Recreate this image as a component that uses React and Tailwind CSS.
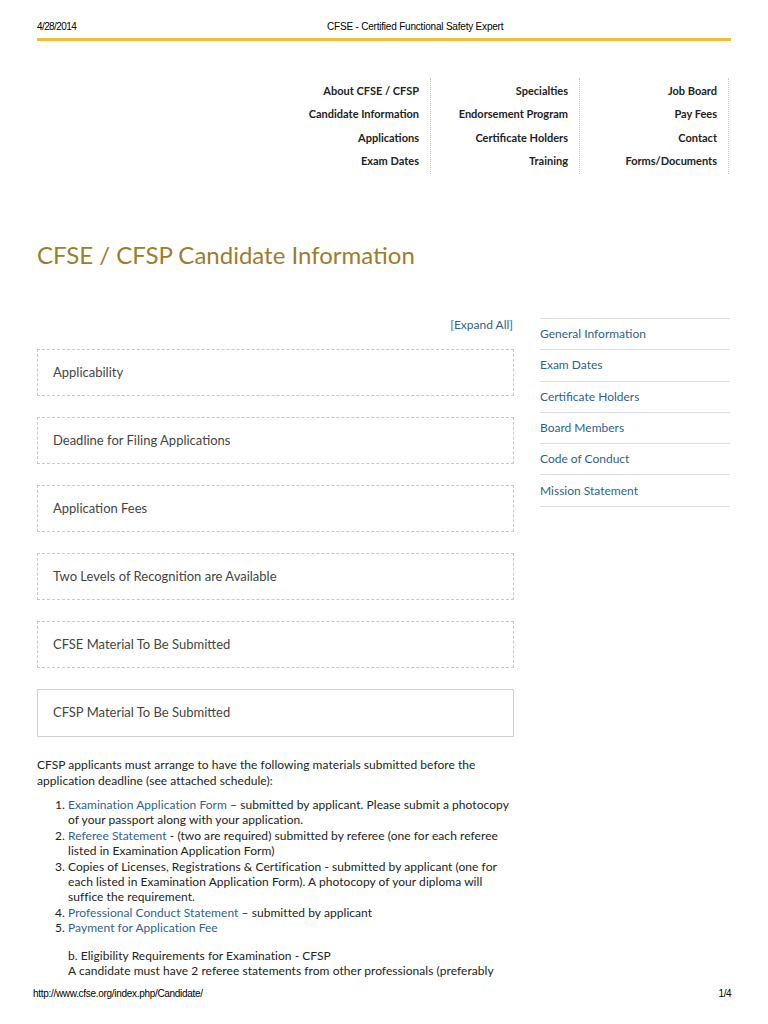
import React from "react";

const navCols = [
  ["About CFSE / CFSP", "Candidate Information", "Applications", "Exam Dates"],
  ["Specialties", "Endorsement Program", "Certificate Holders", "Training"],
  ["Job Board", "Pay Fees", "Contact", "Forms/Documents"],
];

const sections = [
  "Applicability",
  "Deadline for Filing Applications",
  "Application Fees",
  "Two Levels of Recognition are Available",
  "CFSE Material To Be Submitted",
];

const sideLinks = [
  "General Information",
  "Exam Dates",
  "Certificate Holders",
  "Board Members",
  "Code of Conduct",
  "Mission Statement",
];

const link = "text-[#2f5f8f]";

export default function App() {
  return (
    <div className="w-[768px] h-[1024px] bg-white flex flex-col text-[#333] overflow-hidden" style={{ fontFamily: "Lato, 'Noto Sans', sans-serif" }}>
      {/* print header */}
      <div className="h-[40px] px-[37px] pt-[19px] text-[10px] text-black" style={{ fontFamily: "'Liberation Sans', Arial, sans-serif" }}>
        <div className="flex">
          <span className="w-[290px] tracking-[-0.6px]">4/28/2014</span>
          <span className="tracking-[-0.2px]">CFSE - Certified Functional Safety Expert</span>
        </div>
        <div className="mt-[4px] h-[3px] bg-[#f0bf35]" />
      </div>

      {/* top nav */}
      <div className="flex justify-end pr-[39px] mt-[38px]">
        {navCols.map((col, i) => (
          <div key={i} className="w-[149px] border-r border-dotted border-[#c8c8c8] pr-[11px] pt-[1px] pb-[1px] flex flex-col items-end">
            {col.map((t) => (
              <div key={t} className="h-[23.5px] flex items-center text-[11px] font-bold text-[#222]">{t}</div>
            ))}
          </div>
        ))}
      </div>

      <h1 className="ml-[37px] mt-[66px] text-[24px] leading-[30px] text-[#9c7d2c]">CFSE / CFSP Candidate Information</h1>

      <div className="flex mt-[47px] px-[37px]">
        {/* main column */}
        <div className="w-[477px]">
          <div className={`text-right text-[12px] leading-[16px] ${link} pr-[1px]`}>[Expand All]</div>
          <div className="flex flex-col gap-[21px] mt-[16px]">
            {sections.map((s) => (
              <div key={s} className="h-[47px] border border-dashed border-[#c9c9c9] flex items-center pl-[15px] text-[13px] text-[#444]">{s}</div>
            ))}
            <div className="h-[48px] border border-[#d0d0d0] flex items-center pl-[15px] text-[13px] text-[#444]">CFSP Material To Be Submitted</div>
          </div>

          <div className="mt-[20px] text-[12px] tracking-[0.05px] text-[#222]">
            <p className="leading-[16px] pr-[20px]">CFSP applicants must arrange to have the following materials submitted before the application deadline (see attached schedule):</p>
            <ol className="list-decimal pl-[31px] mt-[8px] leading-[15.4px]">
              <li><span className={link}>Examination Application Form</span> – submitted by applicant. Please submit a photocopy of your passport along with your application.</li>
              <li><span className={link}>Referee Statement</span> - (two are required) submitted by referee (one for each referee listed in Examination Application Form)</li>
              <li>Copies of Licenses, Registrations &amp; Certification - submitted by applicant (one for each listed in Examination Application Form). A photocopy of your diploma will suffice the requirement.</li>
              <li><span className={link}>Professional Conduct Statement</span> – submitted by applicant</li>
              <li><span className={link}>Payment for Application Fee</span></li>
            </ol>
            <div className="pl-[31px] mt-[12px] leading-[15.4px]">
              <p>b. Eligibility Requirements for Examination - CFSP</p>
              <p className="whitespace-nowrap">A candidate must have 2 referee statements from other professionals (preferably</p>
            </div>
          </div>
        </div>

        {/* sidebar */}
        <div className="ml-[26px] w-[190px] mt-[1px]">
          <div className="border-t border-[#dcdcdc]">
            {sideLinks.map((s) => (
              <div key={s} className={`h-[31.3px] flex items-center border-b border-[#dcdcdc] text-[12px] ${link}`}>{s}</div>
            ))}
          </div>
        </div>
      </div>

      {/* print footer */}
      <div className="mt-auto h-[38px] flex justify-between pl-[33px] pr-[37px] text-[10px] text-black" style={{ fontFamily: "'Liberation Sans', Arial, sans-serif" }}>
        <span className="tracking-[-0.3px]">http://www.cfse.org/index.php/Candidate/</span>
        <span className="tracking-[-0.5px]">1/4</span>
      </div>
    </div>
  );
}
